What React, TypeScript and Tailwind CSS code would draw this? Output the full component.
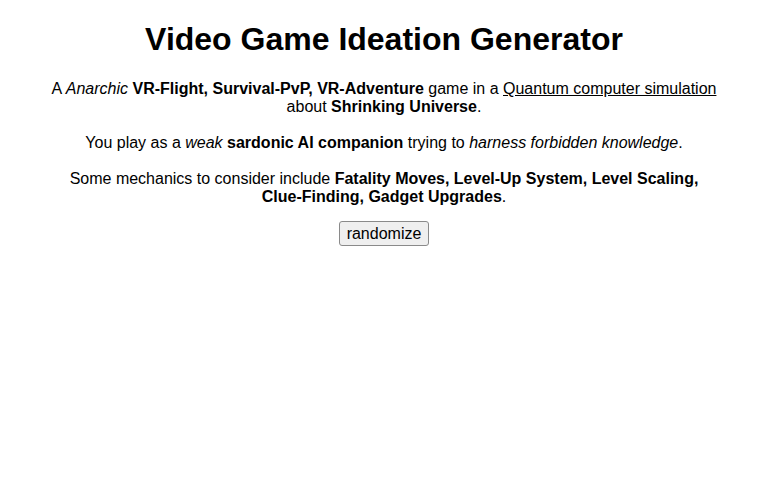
import { useState } from 'react';

const idea = {
  mood: 'Anarchic',
  genres: 'VR-Flight, Survival-PvP, VR-Adventure',
  setting: 'Quantum computer simulation',
  theme: 'Shrinking Universe',
  trait: 'weak',
  role: 'sardonic AI companion',
  goal: 'harness forbidden knowledge',
  mechanics: 'Fatality Moves, Level-Up System, Level Scaling, Clue-Finding, Gadget Upgrades',
};

export default function App() {
  const [game, setGame] = useState(idea);

  return (
    <div className="min-h-[480px] bg-white text-black text-center font-['Liberation_Sans',Arial,sans-serif]">
      <div className="w-[668px] mx-auto">
        <h1 className="text-[32px] leading-[1.15] font-bold pt-[21px] pb-[22px]">Video Game Ideation Generator</h1>
        <p className="text-[16px] leading-[18px]">
          A <i>{game.mood}</i> <b>{game.genres}</b> game in a{' '}
          <a href="#" className="underline">{game.setting}</a> about <b>{game.theme}</b>.
        </p>
        <p className="text-[16px] leading-[18px] mt-[18px]">
          You play as a <i>{game.trait}</i> <b>{game.role}</b> trying to <i>{game.goal}</i>.
        </p>
        <p className="text-[16px] leading-[18px] mt-[18px]">
          Some mechanics to consider include <b>{game.mechanics}</b>.
        </p>
        <button
          onClick={() => setGame({ ...game })}
          className="mt-[15px] px-[7px] py-[2px] text-[16px] leading-[19px] bg-[#efefef] border border-[#8a8a8a] rounded-[3px]"
        >
          randomize
        </button>
      </div>
    </div>
  );
}
